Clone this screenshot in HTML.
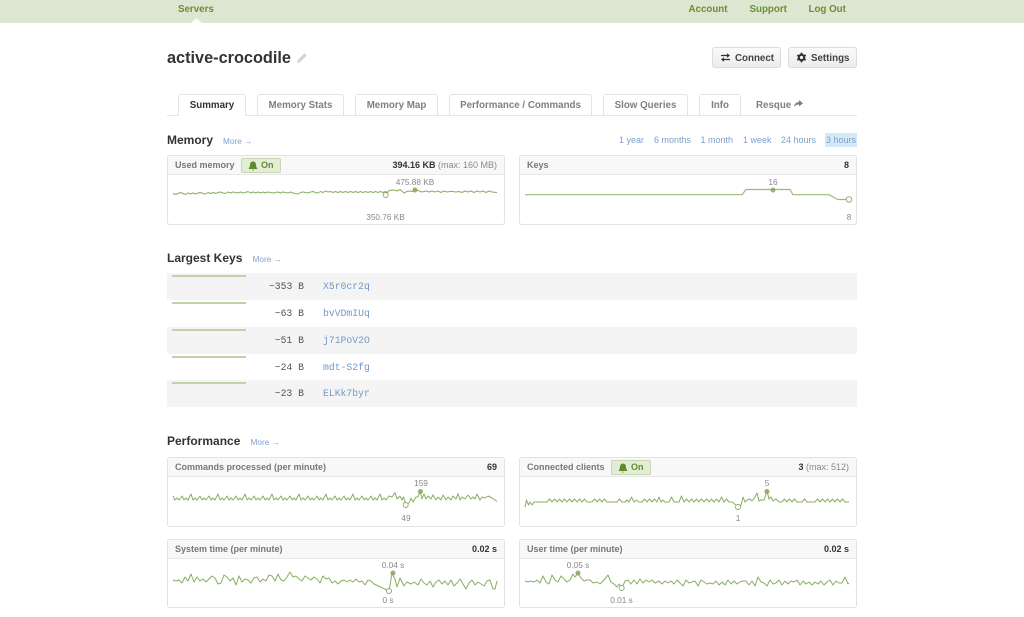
<!DOCTYPE html>
<html><head><meta charset="utf-8"><title>active-crocodile</title>
<style>
*{box-sizing:border-box}
html,body{margin:0;padding:0;background:#fff}
body{width:1024px;height:617px;overflow:hidden;position:relative;font-family:"Liberation Sans",sans-serif;color:#333;filter:blur(.3px)}
a{text-decoration:none;color:inherit}
.t{position:absolute;white-space:nowrap;line-height:12px}
#top{position:absolute;left:0;top:0;width:1024px;height:23px;background:#dde6d1}
.nav{font-size:9.75px;font-weight:bold;color:#6a8f36;top:4px}
.btn{position:absolute;top:47px;height:21px;border:1px solid #dcdcdc;border-radius:3px;background:linear-gradient(#fafafa,#ececec);font-size:9.75px;font-weight:bold;color:#444;line-height:19px}
.btn svg{position:absolute;top:4px}
.btn span{position:absolute;top:1px}
.tab{position:absolute;top:94px;height:21px;border:1px solid #e4e4e4;border-bottom:0;border-radius:3px 3px 0 0;font-size:9.75px;font-weight:bold;color:#808080;text-align:center;line-height:21px;background:#fff}
h2{position:absolute;margin:0;font-size:12px;line-height:14px;font-weight:bold;color:#333;white-space:nowrap}
.more{position:absolute;font-size:8.25px;color:#7fa3d1;line-height:10px;white-space:nowrap}
.range{position:absolute;top:134px;font-size:9px;line-height:12px;color:#7e9fc9;white-space:nowrap}
.panel{position:absolute;border:1px solid #e2e2e2;border-radius:3px;width:338px;height:70px;background:#fff}
.head{position:absolute;left:0;top:0;right:0;height:19px;background:#f8f8f8;border-bottom:1px solid #e8e8e8;border-radius:3px 3px 0 0}
.lab{position:absolute;left:7px;top:3px;font-size:9px;line-height:12px;font-weight:bold;color:#777;white-space:nowrap}
.val{position:absolute;right:7px;top:3px;font-size:9px;line-height:12px;color:#888;white-space:nowrap}
.val b{color:#333}
.on{position:absolute;top:2px;height:15px;width:40px;border:1px solid #c9d8b4;border-radius:2px;background:#e3edd6;font-size:9px;font-weight:bold;color:#5f8a2e;line-height:12px}
.on svg{position:absolute;left:6px;top:1.5px}
.on span{position:absolute;left:19px;top:0}
.cl{position:absolute;font-size:8.25px;line-height:10px;color:#888;white-space:nowrap;transform:translateX(-50%)}
.row{position:absolute;left:167px;width:690px;height:27px}
.row.o{background:#f4f4f4}
.row i{position:absolute;left:5px;top:2px;width:74px;height:2px;background:#c0d2a8}
.sz,.key{position:absolute;top:8px;font-family:"Liberation Mono",monospace;font-size:9.75px;line-height:12px;white-space:nowrap}
.sz{right:553px;color:#555}
.key{left:156px;color:#7198c8}
svg.ch{position:absolute;left:0;top:0;pointer-events:none}
</style></head><body>

<div id="top"></div>
<svg style="position:absolute;left:190px;top:18px" width="13" height="5"><path d="M1 5L6.5 0 12 5z" fill="#fff"/></svg>
<a class="t nav" style="left:178px">Servers</a>
<a class="t nav" style="left:688.5px">Account</a>
<a class="t nav" style="left:749.5px">Support</a>
<a class="t nav" style="left:808.5px">Log Out</a>

<div class="t" style="left:167px;top:48px;font-size:16.3px;line-height:20px;font-weight:bold;color:#333">active-crocodile</div>
<svg style="position:absolute;left:296px;top:52px" width="12" height="12" viewBox="0 0 12 12"><path d="M1 11l.7-3L8.5 1.2l2.3 2.3L4 10.3z" fill="#d4d4d4"/></svg>

<div class="btn" style="left:712px;width:69px">
<svg style="left:7px" width="11" height="11" viewBox="0 0 11 11"><path d="M1 3.5h6.5" stroke="#333" stroke-width="1.3"/><path d="M7 1.2L10 3.5 7 5.800z" fill="#333"/><path d="M10 7.5H3.5" stroke="#333" stroke-width="1.3"/><path d="M4 5.2L1 7.5l3 2.300z" fill="#333"/></svg>
<span style="left:22px">Connect</span></div>
<div class="btn" style="left:788px;width:69px">
<svg style="left:7px" width="11" height="11" viewBox="0 0 11 11"><circle cx="5.5" cy="5.5" r="2.700" fill="none" stroke="#333" stroke-width="2.200"/><path d="M5.5.6v2M5.5 8.400v2M1.300 3.100l1.700 1M8 7l1.700 1M1.300 7.900L3 7M8 4l1.700-.9" stroke="#333" stroke-width="1.800"/></svg>
<span style="left:22px">Settings</span></div>

<div style="position:absolute;left:167px;top:115px;width:690px;height:1px;background:#e6e6e6"></div>
<a class="tab" style="left:178px;width:68px;color:#333;height:22px">Summary</a>
<a class="tab" style="left:257px;width:87px">Memory Stats</a>
<a class="tab" style="left:355px;width:83px">Memory Map</a>
<a class="tab" style="left:449px;width:143px">Performance / Commands</a>
<a class="tab" style="left:603px;width:85px">Slow Queries</a>
<a class="tab" style="left:699px;width:42px">Info</a>
<a class="t" style="left:756px;top:100px;font-size:9.75px;font-weight:bold;color:#808080">Resque</a>
<svg style="position:absolute;left:794px;top:100px" width="9" height="8" viewBox="0 0 9 8"><path d="M5 0l4 3.200L5 6.400V4.500C3 4.500 1.500 5 0 7c.3-3 2-4.800 5-5z" fill="#808080"/></svg>

<h2 style="left:167px;top:133px">Memory</h2>
<a class="more" style="left:223px;top:136.5px">More →</a>
<a class="range" style="left:619px">1 year</a>
<a class="range" style="left:654px">6 months</a>
<a class="range" style="left:700.5px">1 month</a>
<a class="range" style="left:743px">1 week</a>
<a class="range" style="left:781px">24 hours</a>
<a class="range" style="left:825px;width:32px;height:14px;top:133px;background:#d6e9f9;text-align:center;line-height:14px">3 hours</a>

<div class="panel" style="left:167px;top:155px;height:70px"><div class="head"><div class="lab">Used memory</div>
<div class="on" style="left:73px"><svg width="10" height="10" viewBox="0 0 10 10"><path d="M5 .5c2 0 3 1.500 3 3.500 0 1.500.5 2.500 1.200 3.200v.8H.8v-.8C1.500 6.500 2 5.500 2 4c0-2 1-3.500 3-3.500zM4 8.800h2L5 10z" fill="#5f8a2e"/></svg><span>On</span></div>
<div class="val"><b>394.16 KB</b> (max: 160 MB)</div></div></div>

<div class="panel" style="left:519px;top:155px;height:70px"><div class="head"><div class="lab">Keys</div><div class="val"><b>8</b></div></div></div>

<h2 style="left:167px;top:251px">Largest Keys</h2>
<a class="more" style="left:252.5px;top:254.5px">More →</a>

<div class="row o" style="top:273px"><i></i><span class="sz">~353 B</span><a class="key">X5r0cr2q</a></div>
<div class="row" style="top:300px"><i></i><span class="sz">~63 B</span><a class="key">bvVDmIUq</a></div>
<div class="row o" style="top:327px"><i></i><span class="sz">~51 B</span><a class="key">j71PoV2O</a></div>
<div class="row" style="top:354px"><i></i><span class="sz">~24 B</span><a class="key">mdt-S2fg</a></div>
<div class="row o" style="top:380px"><i></i><span class="sz">~23 B</span><a class="key">ELKk7byr</a></div>

<h2 style="left:167px;top:434px">Performance</h2>
<a class="more" style="left:250.5px;top:437.5px">More →</a>

<div class="panel" style="left:167px;top:457px"><div class="head"><div class="lab">Commands processed (per minute)</div><div class="val"><b>69</b></div></div></div>
<div class="panel" style="left:519px;top:457px"><div class="head"><div class="lab">Connected clients</div>
<div class="on" style="left:91px"><svg width="10" height="10" viewBox="0 0 10 10"><path d="M5 .5c2 0 3 1.500 3 3.500 0 1.500.5 2.500 1.200 3.200v.8H.8v-.8C1.500 6.500 2 5.500 2 4c0-2 1-3.500 3-3.500zM4 8.800h2L5 10z" fill="#5f8a2e"/></svg><span>On</span></div>
<div class="val"><b>3</b> (max: 512)</div></div></div>
<div class="panel" style="left:167px;top:539px;height:69px"><div class="head"><div class="lab">System time (per minute)</div><div class="val"><b>0.02 s</b></div></div></div>
<div class="panel" style="left:519px;top:539px;height:69px"><div class="head"><div class="lab">User time (per minute)</div><div class="val"><b>0.02 s</b></div></div></div>

<svg class="ch" width="1024" height="617" fill="none" stroke-linejoin="round">
<g stroke="#8bad62" stroke-width="1">
<path d="M173 193.5l2.500 1 2.500-1 2.500-1 2.500 1 2.500 1 2.500-1.500 2.500 1 2.500-1 2.500 1 2.500-1 2.500-.5 2.500 1 2.500 .5 2.500-1.500 2.500 1 2.500-1 2.500 1 2.500-1 2.500-.5 2.500 1 2.500 .5 2.500-1.500 2.500 1 2.500-1 2.500 .5 2.500 .5 2.500-1 2.500 1 2.500-.5 2.500-1 2.500 1.500 2.500-1 2.500 1 2.500-1 2.500 1 2.500-1 2.500 1 2.500-1 2.500 .5 2.500 .5 2.500-.5 2.500-.5 2.500 1 2.500-1 2.500 .5 2.500 .5 2.500-1 2.500 1 2.500 .5 2.500 .5 2.500-1.500 2.500-.5 2.500 .5 2.500 .5 2.500-1 2.500-.5 2.500 1 2.500 .5 2.500-1.500 2.500 1 2.500-1.500 2.500 1 2.500-.5 2.500 1 2.500-1 2.500 1 2.500-1 2.500 1 2.500-1 2.500 1 2.500-1 2.500 1 2.500-1 2.500 1 2.500-1 2.500 1 2.500-1 2.500 1 2.500-1 2.500 1 2.500-1 2.500 1 2.500-1 2.500 1 2.500-1 2.500 1 L386 194.500 389 190.500 394 190 397 191 400 189.500 404 193 408 191 412 191.500 415 190 418 190.500 422 192 426 191 429 192 432 191 435 192 438 191 441 192.500 444 191 447 192 450 191.500 453 191.500 456 192 459 191.500 462 192.500 465 191 468 192 471 191 474 192.500 477 191 480 192 483 191 486 192.500 489 191 492 192 497 192.500"/>
<path d="M173 496l2 4 2-2 2 2 3-4 2 4 2-2 2 2 3-6 2 6 2-2 2 2 3-4 2 4 2-2 2 2 3-4 2 4 2-2 2 2 3-6 2 6 2-2 2 2 3-4 2 4 2-2 2 2 3-4 2 4 2-2 2 2 3-6 2 6 2-2 2 2 3-4 2 4 2-2 2 2 3-4 2 4 2-2 2 2 3-6 2 6 2-2 2 2 3-4 2 4 2-2 2 2 3-4 2 4 2-2 2 2 3-6 2 6 2-2 2 2 3-4 2 4 2-2 2 2 3-4 2 4 2-2 2 2 3-6 2 6 2-2 2 2 3-4 2 4 2-2 2 2 3-4 2 4 2-2 2 2 3-6 2 6 2-2 2 2 3-4 2 4 2-2 2 2 3-4 2 4 2-2 2 2 3-6 2 6 2-2 2 2 3-4 L392 497 395 492.500 397 499 400 496 402 500 403.500 497 406 505 409 503 411 498 413 502 416 497 418 497 420 491 422 499 424 494 426 499 428 496 431 499 433 495 436 500 438 497 441 500 443 495 446 500 448 497 451 500 453 496 456 499 458 493.500 460 500 462 497 465 499 468 495 471 499 473 497 475 499 477 494 480 500 482 497 485 498 488 496 490 497 492 498 495 500 497 501.500"/>
<path d="M525 507L526.500 500 528.500 505 530 502 532 505 534 502 536 502H547l2.500-3 2.500 3 2.500-3 2.500 3 2.500-3 2.500 3 2.500-3 2.500 3 2.500-3 2.500 3 2.500-3 2.500 3 2.500-3 2.500 3 2.500-3 2.500 3h5l2.500-3 2.500 3 2.500-3 2.500 3 2.500-3 2.500 3h10l2.500-3 2.500 3h3l2-2 2 2 2.500-5 2.500 5 2.500-2 2.500 2h3l2.500-3 2.500 3 2.500-3 2.500 3 2.500-3 2.500 3 2-5 2 5 2-2 2 2h4l2.500-5 2.500 5h5l2.500-6 2.500 6 2.500-3 2.500 3 2.500-3 2.500 3 2.500-3 2.500 3 2.500-3 2.500 3 2.500-3 2.500 3 2.500-3 2.500 3 2.500-3 2.500 3 2.500-5 2.500 5 2.500-3 2.500 3h3L738 506.500 741 505 743 497 745 502 747 500 750 499 752 501 755 497 757 493 759 501 761 500 764 500 767 491 769 499 771 497 773 501 776 499 779 502h3l2.500-3 2.500 3 2.500-3 2.500 3 2.500-3 2.500 3h5l2.500-3 2.500 3h8l2.500-3 2.500 3 2.500-3 2.500 3 2.500-3 2.500 3 2.500-3 2.500 3 2.500-3 2.500 3 2.500-3 2.500 3h4"/>
<path d="M173 580l3 1 3-1 3 3 3-6 3 4 3-7 3 8 3-5 3 4 3-2 3 3 3-3 3-3 3 2 3 6 3-1 3-8 3 2 3 4 3-3 3 7 3-9 3 6 3-3 3 1 3 3 3-5 3-1 3 5 3-3 3 2 3-6 3 1 3 5 3-7 3 6 3 1 3-4 3-5 3 5 3-1 3 3 3 2 3-5 3 2 3 2 3-3 3 2 3 4 3-7 3 3 3-1 3 5 3-2 3 3 3-3 3-1 3 2 3-2 3 2 3-3 3 3 3-1 3 4 3-5 3 1 3 3 L389 591 392 573 395 579 397 587 400 578 402 582 404 586 407 582 411 584 414 582 418 585 421 579 424 583 427 585 430 581 433 587 436 582 439 580 442 584 445 581 448 585 451 580 454 586 457 583 460 579 463 584 466 589 469 583 472 580 475 585 478 582 481 584 484 586 487 581 490 580 493 589 495 589 497 581"/>
<path d="M525 581l3 1 3-1 3 1 3-2 3 3 3-7 3 6 3 2 3-9 3 5 3 2 3-6 3 3 3 3 3-2 L573 574 575 577 578 573 581 578 584 581 587 580 590 580 593 583 597 582 600 584 603 581 608 575 611 582 614 584 617 587 619 584 622 588 625 581 628 580 631 584 634 580 637 584 640 579 643 583 646 580 649 582 652 580 655 583 659 581 662 584 665 581 668 583 671 581 674 584 677 580 680 583 683 586 686 580 689 583 692 582 695 581 698 586 701 580 704 582 707 584 710 583 713 584 716 581 719 585 722 582 725 585 728 580 731 584 734 581 737 584 740 582 743 581 746 581 749 585 752 581 755 586 758 577 761 582 764 583 767 586 770 580 773 584 776 583 779 580 782 585 785 581 788 584 791 581 794 582 797 580 800 585 803 581 806 584 809 582 812 585 815 582 818 584 821 581 824 585 827 582 830 580 833 585 836 581 839 583 842 583 845 577 848 584 849 583"/>
</g>
<path d="M525 194.700H742L746 189.500H773H790L793 194.700H829L835 198 838 199.500H846" stroke="#9dba78" stroke-width="1.200"/>
<g fill="#8aa967" stroke="#8aa967" stroke-width=".5" opacity=".9">
<circle cx="415" cy="190" r="2.300"/><circle cx="773" cy="190" r="2.300"/><circle cx="420.500" cy="491.500" r="2.300"/><circle cx="767" cy="491.500" r="2.300"/><circle cx="393" cy="573" r="2.300"/><circle cx="578" cy="573" r="2.300"/>
</g>
<g fill="#fff" stroke="#8aa967" stroke-width=".9">
<circle cx="385.700" cy="195" r="2.500"/><circle cx="849" cy="199.500" r="2.800"/><circle cx="405.700" cy="505" r="2.500"/><circle cx="738" cy="507" r="2.500"/><circle cx="389" cy="591" r="2.500"/><circle cx="621.700" cy="588" r="2.500"/>
</g>
</svg>

<div class="cl" style="left:415px;top:178px">475.88 KB</div>
<div class="cl" style="left:385.5px;top:213px">350.76 KB</div>
<div class="cl" style="left:773px;top:178px">16</div>
<div class="cl" style="left:849px;top:213px">8</div>
<div class="cl" style="left:421px;top:479px">159</div>
<div class="cl" style="left:406px;top:514px">49</div>
<div class="cl" style="left:767px;top:479px">5</div>
<div class="cl" style="left:738px;top:514px">1</div>
<div class="cl" style="left:393px;top:561px">0.04 s</div>
<div class="cl" style="left:388px;top:596px">0 s</div>
<div class="cl" style="left:578px;top:561px">0.05 s</div>
<div class="cl" style="left:621.5px;top:596px">0.01 s</div>
</body></html>
